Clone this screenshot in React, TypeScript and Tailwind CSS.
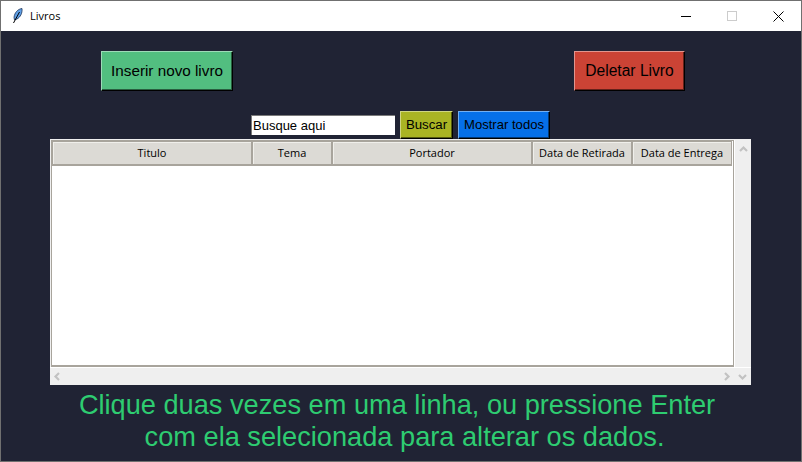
import { useState } from 'react';

const COLUMNS = [
  { label: 'Titulo', width: 'w-[200px]' },
  { label: 'Tema', width: 'w-[80px]' },
  { label: 'Portador', width: 'w-[200px]' },
  { label: 'Data de Retirada', width: 'w-[100px]' },
  { label: 'Data de Entrega', width: 'w-[100px]' },
];

const raised = 'border border-t-[#ffffff70] border-l-[#ffffff70] border-r-black border-b-black shadow-[inset_-1px_-1px_0_#00000080]';

function TitleBar() {
  return (
    <div className="flex h-[30px] items-center bg-white text-black">
      <svg width="12" height="16" viewBox="0 0 12 16" className="ml-[11px]">
        <path d="M10 0.5 C6 1 2.5 4.5 2 9.5 L2.5 12 L5 11 C8.5 9 10.5 5 10 0.5 Z" fill="#5f9fe6" stroke="#1f3558" strokeWidth="0.8" />
        <path d="M7.5 4 L1.5 15" stroke="#000" strokeWidth="1" />
      </svg>
      <span className="ml-[6px] text-[11px] [font-family:'Open_Sans',sans-serif]">Livros</span>
      <div className="ml-auto flex h-full">
        <div className="flex w-[46px] items-center justify-center">
          <svg width="10" height="10" viewBox="0 0 10 10"><path d="M0 5.5H10" stroke="#000" strokeWidth="1" /></svg>
        </div>
        <div className="flex w-[46px] items-center justify-center">
          <svg width="10" height="10" viewBox="0 0 10 10"><rect x="0.5" y="0.5" width="9" height="9" fill="none" stroke="#ccc" /></svg>
        </div>
        <div className="flex w-[46px] items-center justify-center">
          <svg width="11" height="11" viewBox="0 0 11 11"><path d="M0.5 0.5L10.5 10.5M10.5 0.5L0.5 10.5" stroke="#000" strokeWidth="1" /></svg>
        </div>
      </div>
    </div>
  );
}

function Chevron({ d }: { d: string }) {
  return (
    <svg width="9" height="9" viewBox="0 0 9 9">
      <path d={d} fill="none" stroke="#c2c2c2" strokeWidth="2.2" />
    </svg>
  );
}

function Table() {
  return (
    <div className="ml-[49px] flex h-[246px] w-[701px] flex-col bg-[#efefef]">
      <div className="flex h-[228px] pl-px pt-px">
        <div className="flex w-[683px] flex-col border border-b-2 border-[#a8a49c] bg-white">
          <div className="flex h-[25px] [font-family:'Open_Sans',sans-serif] text-[11px] text-black">
            {COLUMNS.map(col => (
              <div key={col.label}
                className={`${col.width} flex items-center justify-center border border-b-2 border-[#a8a49c] bg-[#dcdad5] pt-px whitespace-nowrap shadow-[inset_1px_1px_0_#f0efeb]`}>
                {col.label}
              </div>
            ))}
          </div>
        </div>
        <div className="flex w-[17px] justify-center border-l border-white pt-[5px]">
          <Chevron d="M1 6L4.5 2.5L8 6" />
        </div>
      </div>
      <div className="flex h-[18px] items-center justify-between border-t border-white pl-[3px] pr-[4px]">
        <Chevron d="M6 1L2.5 4.5L6 8" />
        <div className="flex items-center gap-[7px]">
          <Chevron d="M3 1L6.5 4.5L3 8" />
          <Chevron d="M1 3L4.5 6.5L8 3" />
        </div>
      </div>
    </div>
  );
}

export default function App() {
  const [search, setSearch] = useState('Busque aqui');

  return (
    <div className="flex h-[462px] w-[802px] flex-col border border-[#707070] bg-[#202334] [font-family:'Liberation_Sans',sans-serif]">
      <TitleBar />

      <div className="flex pt-[20px]">
        <button className={`${raised} ml-[100px] h-[40px] w-[132px] bg-[#52be80] text-[15.25px] text-black`}>
          Inserir novo livro
        </button>
        <button className={`${raised} ml-[341px] h-[40px] w-[111px] bg-[#cb4335] text-[15.6px] text-black`}>
          Deletar Livro
        </button>
      </div>

      <div className="mt-[20px] flex h-[28px] items-center">
        <input value={search} onChange={e => setSearch(e.target.value)}
          className="ml-[250px] h-[20px] w-[144px] border border-[#7a7a7a] border-r-0 border-b-0 bg-white px-[1px] text-[13px] text-black outline-none" />
        <button className={`${raised} ml-[5px] h-[28px] w-[53px] bg-[#aab424] text-[13.25px] text-black`}>
          Buscar
        </button>
        <button className={`${raised} ml-[5px] h-[28px] w-[92px] bg-[#0670e8] text-[13.1px] text-black`}>
          Mostrar todos
        </button>
      </div>

      <Table />

      <div className="mt-[4px] w-[792px] text-center text-[27.2px] leading-[32px] text-[#2ecc71]">
        <div>Clique duas vezes em uma linha, ou pressione Enter</div>
        <div>&nbsp;&nbsp;com ela selecionada para alterar os dados.</div>
      </div>
    </div>
  );
}
